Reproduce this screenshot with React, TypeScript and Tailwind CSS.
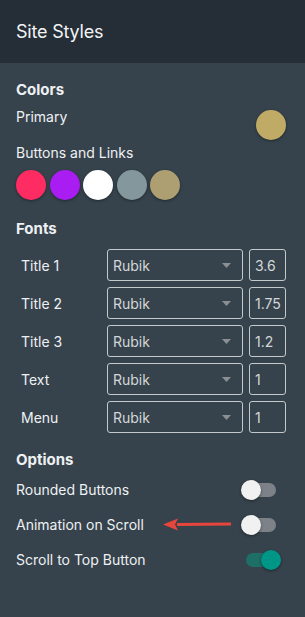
import React from "react";

const buttonColors = ["#ff2c63", "#a91cf2", "#ffffff", "#84979c", "#ad9f72"];

const fonts = [
  { label: "Title 1", size: "3.6" },
  { label: "Title 2", size: "1.75" },
  { label: "Title 3", size: "1.2" },
  { label: "Text", size: "1" },
  { label: "Menu", size: "1" },
];

function Toggle({ on }: { on: boolean }) {
  return (
    <div className="relative w-[30px] h-[14px] mr-[13px]">
      <div
        className={
          on
            ? "absolute inset-0 rounded-full bg-[#1d6f67]"
            : "absolute inset-0 rounded-full bg-[#7c8287]"
        }
      />
      <div
        className={
          on
            ? "absolute top-[-3px] left-[15px] w-[20px] h-[20px] rounded-full bg-[#009687] shadow-[0_1px_3px_rgba(0,0,0,0.45)]"
            : "absolute top-[-3px] left-[-5px] w-[20px] h-[20px] rounded-full bg-[#f1f1f1] shadow-[0_1px_3px_rgba(0,0,0,0.45)]"
        }
      />
    </div>
  );
}

export default function App() {
  return (
    <div
      className="w-full h-[617px] flex flex-col bg-[#36434c] text-[#eef1f3]"
      style={{ fontFamily: "Inter, Roboto, sans-serif" }}
    >
      {/* Header */}
      <div className="h-[63px] shrink-0 bg-[#252d36] px-4 flex items-center">
        <h1 className="text-[18px] leading-[24px] text-[#f2f4f5] tracking-[-0.2px]">Site Styles</h1>
      </div>

      <div className="flex-1 px-4 pt-[17px]">
        {/* Colors */}
        <h2 className="text-[15px] leading-[20px] font-bold">Colors</h2>
        <div className="mt-[7px] flex items-start justify-between">
          <span className="text-[14px] leading-[20px]">Primary</span>
          <div className="mt-[3px] mr-[3px] w-[30px] h-[30px] rounded-full bg-[#c0ab66] shadow-[0_1px_3px_rgba(0,0,0,0.4)]" />
        </div>
        <div className="mt-[3px] text-[14px] leading-[20px]">Buttons and Links</div>
        <div className="mt-[7px] flex gap-[3.5px]">
          {buttonColors.map((c) => (
            <div
              key={c}
              className="w-[30px] h-[30px] rounded-full shadow-[0_1px_3px_rgba(0,0,0,0.4)]"
              style={{ background: c }}
            />
          ))}
        </div>

        {/* Fonts */}
        <h2 className="mt-[19px] text-[15px] leading-[20px] font-bold">Fonts</h2>
        <div className="mt-[10px] flex flex-col gap-[6px]">
          {fonts.map((f) => (
            <div key={f.label} className="flex items-center h-[32px]">
              <span className="w-[91px] pl-[5px] text-[14px]">{f.label}</span>
              <div className="w-[136px] h-full border border-[#c4c9cc] rounded-[3px] flex items-center justify-between pl-[5px] pr-[11px]">
                <span className="text-[14px] text-[#d4d7d9]">Rubik</span>
                <svg width="9" height="5" viewBox="0 0 9 5">
                  <path d="M0 0 L9 0 L4.5 5 Z" fill="#8b9094" />
                </svg>
              </div>
              <div className="ml-[6px] w-[37px] h-full border border-[#c4c9cc] rounded-[3px] flex items-center pl-[5px]">
                <span className="text-[14px] text-[#d4d7d9]">{f.size}</span>
              </div>
            </div>
          ))}
        </div>

        {/* Options */}
        <h2 className="mt-[17px] text-[15px] leading-[20px] font-bold">Options</h2>
        <div className="mt-[2px] flex flex-col">
          <div className="h-[35px] flex items-center justify-between">
            <span className="text-[14px]">Rounded Buttons</span>
            <Toggle on={false} />
          </div>
          <div className="relative h-[35px] flex items-center justify-between">
            <span className="text-[14px]">Animation on Scroll</span>
            <svg
              className="absolute left-[147px] top-[11px]"
              width="70"
              height="13"
              viewBox="0 0 70 13"
            >
              <path d="M14 5 L68 4.5 L68 7.5 L14 8 Z" fill="#e8453d" />
              <path d="M0 6.5 L15 0.5 L12 6.5 L15 12.5 Z" fill="#e8453d" />
            </svg>
            <Toggle on={false} />
          </div>
          <div className="h-[35px] flex items-center justify-between">
            <span className="text-[14px]">Scroll to Top Button</span>
            <Toggle on={true} />
          </div>
        </div>
      </div>
    </div>
  );
}
